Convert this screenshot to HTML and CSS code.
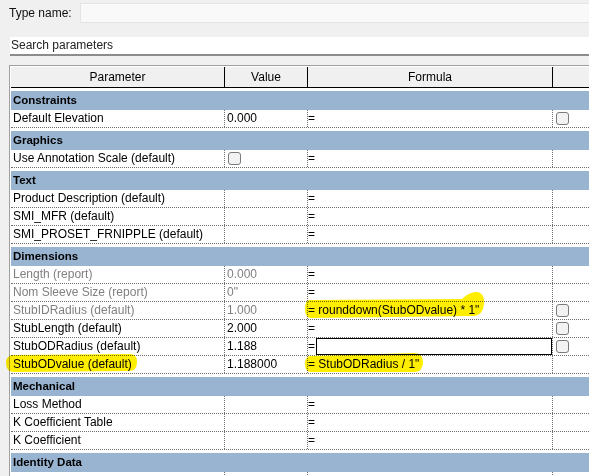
FILE: index.html
```html
<!DOCTYPE html>
<html>
<head>
<meta charset="utf-8">
<link rel="stylesheet" href="styles.css">
</head>
<body>
<div class="typerow">
  <span class="typelabel">Type name:</span>
  <div class="typeinput"></div>
</div>
<div class="search">Search parameters</div>
<div class="table">
  <div class="hdr">
    <div class="hc">Parameter</div>
    <div class="hc">Value</div>
    <div class="hc">Formula</div>
    <div class="hc"></div>
  </div>

  <div class="group">Constraints</div>
  <div class="row"><div class="c c1">Default Elevation</div><div class="c c2">0.000</div><div class="c c3">=</div><div class="c c4"><span class="cb cb4"></span></div></div>

  <div class="group">Graphics</div>
  <div class="row"><div class="c c1">Use Annotation Scale (default)</div><div class="c c2"><span class="cb cb2"></span></div><div class="c c3">=</div><div class="c c4"></div></div>

  <div class="group">Text</div>
  <div class="row"><div class="c c1">Product Description (default)</div><div class="c c2"></div><div class="c c3">=</div><div class="c c4"></div></div>
  <div class="row"><div class="c c1">SMI_MFR (default)</div><div class="c c2"></div><div class="c c3">=</div><div class="c c4"></div></div>
  <div class="row"><div class="c c1">SMI_PROSET_FRNIPPLE (default)</div><div class="c c2"></div><div class="c c3">=</div><div class="c c4"></div></div>

  <div class="group">Dimensions</div>
  <div class="row dim"><div class="c c1">Length (report)</div><div class="c c2">0.000</div><div class="c c3 blk">=</div><div class="c c4"></div></div>
  <div class="row dim"><div class="c c1">Nom Sleeve Size (report)</div><div class="c c2">0"</div><div class="c c3 blk">=</div><div class="c c4"></div></div>
  <div class="row dim"><div class="c c1">StubIDRadius (default)</div><div class="c c2">1.000</div><div class="c c3 blk">= rounddown(StubODvalue) * 1"</div><div class="c c4"><span class="cb cb4"></span></div></div>
  <div class="row"><div class="c c1">StubLength (default)</div><div class="c c2">2.000</div><div class="c c3">=</div><div class="c c4"><span class="cb cb4"></span></div></div>
  <div class="row"><div class="c c1">StubODRadius (default)</div><div class="c c2">1.188</div><div class="c c3">=<div class="finput"></div></div><div class="c c4"><span class="cb cb4"></span></div></div>
  <div class="row"><div class="c c1">StubODvalue (default)</div><div class="c c2">1.188000</div><div class="c c3">= StubODRadius / 1"</div><div class="c c4"></div></div>

  <div class="group">Mechanical</div>
  <div class="row"><div class="c c1">Loss Method</div><div class="c c2"></div><div class="c c3">=</div><div class="c c4"></div></div>
  <div class="row"><div class="c c1">K Coefficient Table</div><div class="c c2"></div><div class="c c3">=</div><div class="c c4"></div></div>
  <div class="row"><div class="c c1">K Coefficient</div><div class="c c2"></div><div class="c c3">=</div><div class="c c4"></div></div>

  <div class="group">Identity Data</div>
  <div class="row"><div class="c c1"></div><div class="c c2"></div><div class="c c3"></div><div class="c c4"></div></div>
</div>

<svg class="marker" width="589" height="476" viewBox="0 0 589 476">
  <path d="M14,355 L130,354 Q137,354 137,362 Q137,371 129,371 L14,372 Q6,372 6,363 Q6,355 14,355 Z"/>
  <path d="M310,300 L462,299 Q470,291 478,292 Q485,294 484,304 Q483,315 474,316 L311,318 Q305,318 305,309 Q305,300 310,300 Z"/>
  <path d="M311,356 L414,353 Q423,353 423,362 Q423,372 414,372 L311,372 Q305,372 305,364 Q305,356 311,356 Z"/>
</svg>
</body>
</html>
```

FILE: styles.css
```css
html, body {
  margin: 0;
  padding: 0;
}
body {
  background: #f0f0f0;
  font-family: "Liberation Sans", Arial, sans-serif;
  font-size: 12px;
  color: #000;
  width: 589px;
  height: 476px;
  overflow: hidden;
  position: relative;
}
.typerow {
  display: flex;
  align-items: center;
  height: 20px;
  margin-top: 3px;
}
.typelabel {
  width: 80px;
  padding-left: 9px;
  box-sizing: border-box;
  color: #111;
}
.typeinput {
  flex: 1;
  height: 20px;
  box-sizing: border-box;
  background: #f9f9f9;
  border: 1px solid #e4e4e4;
  border-right: none;
}
.search {
  margin: 14px 0 9px 10px;
  height: 19px;
  box-sizing: border-box;
  background: #fff;
  border-bottom: 2px solid #8c8c8c;
  line-height: 17px;
  padding-left: 1px;
  color: #222;
}
.table {
  margin-left: 9px;
  border-left: 1px solid #a0a0a0;
  border-top: 1px solid #a0a0a0;
  padding-left: 1px;
  background: #fff;
}
.hdr, .row {
  display: grid;
  grid-template-columns: 213px 83px 245px 1fr;
}
.hdr {
  border-top: 1px solid #fff;
  border-bottom: 1px solid #000;
  height: 20px;
}
.hc {
  background: #f0f0f0;
  text-align: center;
  line-height: 20px;
}
.hc + .hc {
  border-left: 1px solid #000;
}
.group {
  border-top: 3px solid #fff;
  background: #99b4d1;
  height: 19px;
  line-height: 19px;
  font-weight: bold;
  font-size: 11.5px;
  padding-left: 2px;
}
.row {
  height: 17px;
  border-bottom: 1px dotted #6e6e6e;
}
.c {
  display: flex;
  align-items: center;
  line-height: 17px;
  white-space: nowrap;
  overflow: hidden;
}
.c + .c {
  border-left: 1px dotted #6e6e6e;
}
.c1 { padding-left: 2px; }
.c2 { padding-left: 2px; }
.c3 { padding-left: 0; }
.dim .c1, .dim .c2 { color: #808080; }
.cb {
  display: inline-block;
  width: 11px;
  height: 11px;
  border: 1px solid #7a7a7a;
  border-radius: 3px;
  background: #f3f3f3;
}
.cb2 { margin-left: 1px; }
.cb4 { margin-left: 3px; }
.finput {
  flex: 1;
  height: 17px;
  box-sizing: border-box;
  border: 1px solid #000;
  background: #fff;
  margin-left: 1px;
}
.marker {
  position: absolute;
  left: 0;
  top: 0;
  pointer-events: none;
  mix-blend-mode: multiply;
  fill: #ffee00;
}
```
